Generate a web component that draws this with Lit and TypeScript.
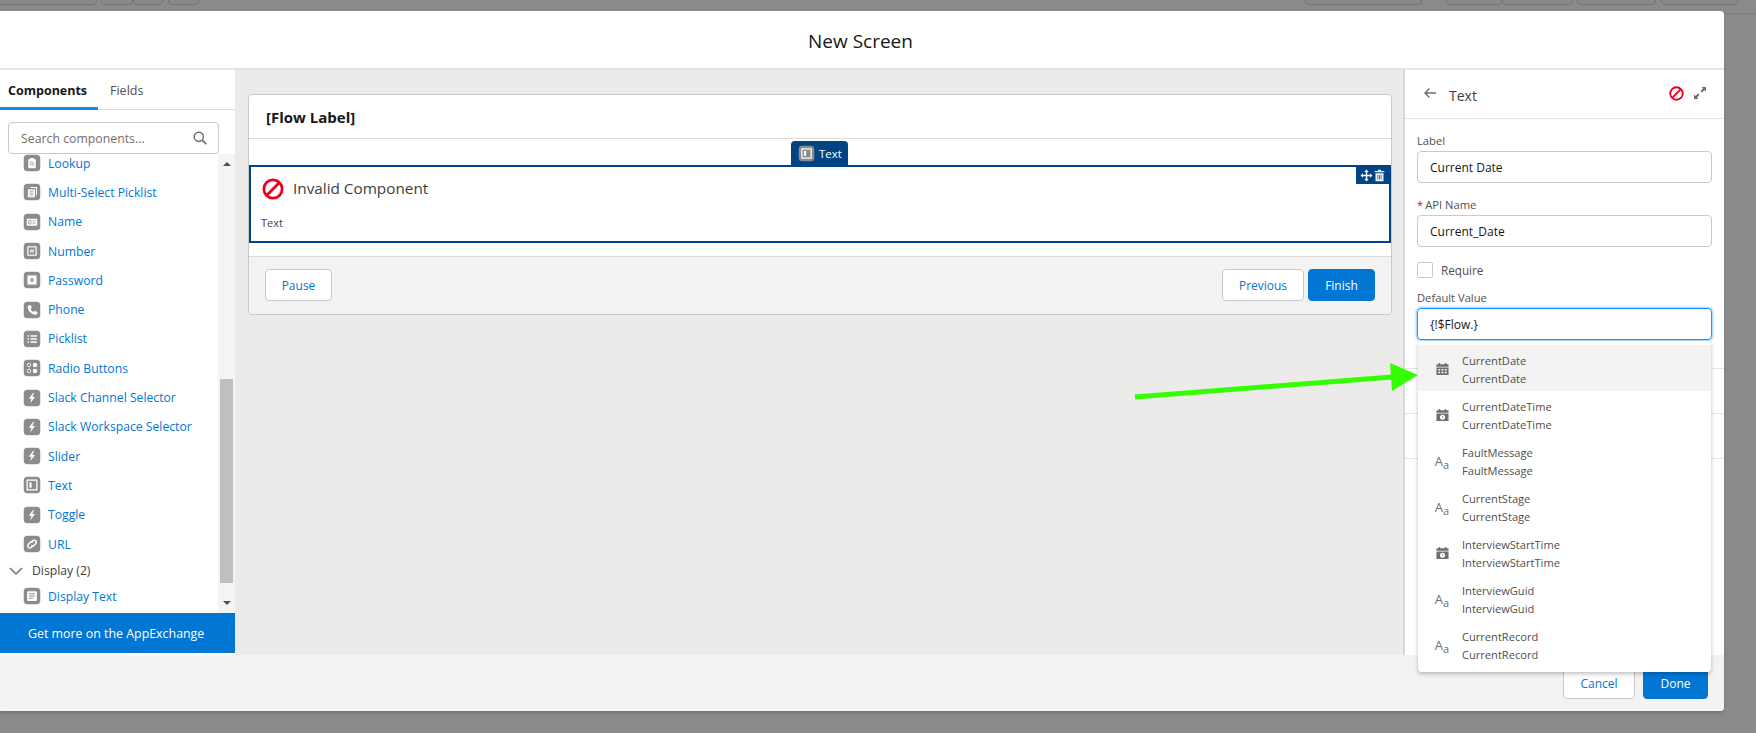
import { LitElement, html, css, svg } from "lit";
import { customElement } from "lit/decorators.js";

const bolt = svg`<path d="M13.6 5 7.800 13h3.400l-1.400 6 6.200-8.400h-3.500l2.300-5.600z" fill="#fff"/>`;
const icons: Record<string, any> = {
  lookup: svg`<path d="M7 7h2.500V5.200h5V7H17v12H7z" fill="#fff"/><circle cx="11.500" cy="12.500" r="2" fill="none" stroke="#8c8c8c" stroke-width="1.100"/><path d="m13 14 1.700 1.800" stroke="#8c8c8c" stroke-width="1.100"/>`,
  multi: svg`<path d="M10 6h8v10" fill="none" stroke="#fff" stroke-width="1.400"/><path d="M6.500 8.500H16V19H6.500z" fill="#fff"/><path d="M8.500 11h5.500M8.500 13.500h5.500M8.500 16h5.500" stroke="#8c8c8c"/>`,
  name: svg`<rect x="5" y="7.500" width="14" height="9.500" rx="1" fill="#fff"/><path d="M7.500 10h3v4.500h-3zM12.500 10.500h4.500M12.500 13.500h4.500" stroke="#8c8c8c" fill="none"/>`,
  number: svg`<rect x="6.500" y="6.500" width="11" height="11" fill="none" stroke="#fff" stroke-width="1.600"/><path d="M11 9.500 10 14.500M14 9.500l-1 5M9.300 11h5.500M9 13h5.500" stroke="#fff" stroke-width=".9"/>`,
  password: svg`<rect x="6" y="6" width="12" height="12" fill="#fff"/><path d="M12 8.700v6.600M9.200 10.400l5.600 3.200M14.800 10.400l-5.600 3.200" stroke="#8c8c8c" stroke-width="1.300"/>`,
  phone: svg`<path d="M8 5.500 10.300 5.300l1.500 3.700-1.600 1.500c.8 1.700 2.100 3.200 3.900 4.100l1.600-1.600 3.500 1.600-.3 2.400c-.2.800-1.100 1.500-2.100 1.400C11 17.700 6.300 12.800 6.200 7.600c0-1 .9-2 1.800-2.100z" fill="#fff"/>`,
  picklist: svg`<path d="M6 8h2M6 12h2M6 16h2M10 8h8.500M10 12h8.500M10 16h8.500" stroke="#fff" stroke-width="1.900"/>`,
  radio: svg`<circle cx="8" cy="8" r="2.300" fill="none" stroke="#fff" stroke-width="1.100"/><circle cx="16" cy="8" r="2.900" fill="#fff"/><circle cx="8" cy="16" r="2.300" fill="none" stroke="#fff" stroke-width="1.100"/><circle cx="16" cy="16" r="2.900" fill="#fff"/>`,
  bolt,
  text: svg`<rect x="5.500" y="5.500" width="13" height="13" fill="none" stroke="#fff" stroke-width="1.700"/><rect x="8.500" y="8.500" width="3" height="7" fill="#fff"/>`,
  url: svg`<g fill="none" stroke="#fff" stroke-width="1.900"><path d="M11 9.500 12.800 7.700a2.800 2.800 0 0 1 4 4L14.500 14a2.800 2.800 0 0 1-3.700.2"/><path d="M13 14.500l-1.800 1.800a2.800 2.800 0 0 1-4-4L9.500 10a2.800 2.800 0 0 1 3.700-.2"/></g>`,
  display: svg`<rect x="5.500" y="5.500" width="13" height="13" rx="1.500" fill="#fff"/><path d="M8 9h8M8 12h8M8 15h5.500" stroke="#8c8c8c" stroke-width="1.300"/>`,
};

const fields: [string, string][] = [
  ["Lookup", "lookup"], ["Multi-Select Picklist", "multi"], ["Name", "name"], ["Number", "number"],
  ["Password", "password"], ["Phone", "phone"], ["Picklist", "picklist"], ["Radio Buttons", "radio"],
  ["Slack Channel Selector", "bolt"], ["Slack Workspace Selector", "bolt"], ["Slider", "bolt"],
  ["Text", "text"], ["Toggle", "bolt"], ["URL", "url"],
];

const results: [string, string][] = [
  ["CurrentDate", "date"], ["CurrentDateTime", "time"], ["FaultMessage", "aa"], ["CurrentStage", "aa"],
  ["InterviewStartTime", "time"], ["InterviewGuid", "aa"], ["CurrentRecord", "aa"],
];

const ghosts: [number, number][] = [
  [-6, 103], [101, 32], [133, 30], [168, 31], [1305, 117], [1446, 56], [1502, 71], [1577, 79], [1661, 77],
];

const tile = (k: string) => html`<svg class="tile" viewBox="0 0 24 24"><rect x="1" y="1" width="22" height="22" rx="5" fill="#8c8c8c"/>${icons[k]}</svg>`;

const noEntry = (cls: string) => html`<svg class=${cls} viewBox="0 0 24 24"><circle cx="12" cy="12" r="10" fill="none" stroke="#ea001e" stroke-width="3"/><path d="M5.500 18.500l13-13" stroke="#ea001e" stroke-width="3"/></svg>`;

const resultIcon = (k: string) => {
  if (k === "aa") return html`<span class="aa">A<small>a</small></span>`;
  if (k === "date") return html`<svg class="ri" viewBox="0 0 14 14"><path d="M3 .5h1.500V2h5V.5H11V2h2.500v2.500H.500V2H3zM.500 5.500h13v8H.500z" fill="#706e6b"/><path d="M2.500 7h2v1.500h-2zM6 7h2v1.500H6zM9.500 7h2v1.500h-2zM2.500 10h2v1.500h-2zM6 10h2v1.500H6zM9.500 10h2v1.500h-2z" fill="#fff"/></svg>`;
  return html`<svg class="ri" viewBox="0 0 14 14"><path d="M3 .5h1.500V2h5V.5H11V2h2.500v2.500H.500V2H3zM.500 5.500h13v8H.500z" fill="#706e6b"/><circle cx="7" cy="9.500" r="2.700" fill="#fff"/><path d="M7 8v1.600l1 .6" stroke="#706e6b" fill="none" stroke-width=".8"/></svg>`;
};

@customElement("app-root")
export class AppRoot extends LitElement {
  static styles = css`
    :host { display: block; width: 1756px; height: 733px; background: #8a8a8a; overflow: hidden; position: relative;
      font-family: "Open Sans", "Noto Sans", sans-serif; font-size: 12px; color: #3e3e3c; }
    * { box-sizing: border-box; }
    .ghosts { height: 11px; position: relative; }
    .ghost { position: absolute; top: -10px; height: 15px; border: 1px solid #757575; border-radius: 4px; }
    .hair { position: absolute; left: 1724px; right: 0; top: 13px; height: 1px; background: #7d7d7d; }
    .modal { width: 1724px; height: 700px; background: #fff; border-radius: 0 4px 4px 0; display: flex; flex-direction: column;
      box-shadow: 0 2px 3px rgba(0,0,0,.16); }
    .title { height: 59px; flex: none; display: flex; align-items: center; justify-content: center; font-size: 19px; color: #181818; border-bottom: 2px solid #e5e5e5; padding: 2px 3px 0 0; }
    .body { height: 585px; flex: none; display: flex; background: #ecebea; }
    .side { width: 235px; flex: none; background: #fff; display: flex; flex-direction: column; }
    .tabs { height: 40px; flex: none; display: flex; border-bottom: 1px solid #dddbda; font-size: 12.500px; }
    .tab { padding-top: 12px; }
    .tab.on { width: 98px; padding-left: 8px; font-weight: 700; color: #181818; border-bottom: 3px solid #1589ee; height: 40px; }
    .tab.off { padding-left: 12px; color: #514f4d; }
    .search { flex: none; margin: 12px 0 0 8px; width: 211px; height: 32px; border: 1px solid #c9c9c9; border-radius: 4px; display: flex; align-items: center; justify-content: space-between; padding: 0 11px 0 12px; color: #706e6b; font-size: 12.300px; background: #fff; position: relative; z-index: 1; }
    .search svg { width: 14px; height: 14px; }
    .listwrap { height: 459px; flex: none; display: flex; }
    .list { flex: 1; margin-top: -5.500px; min-width: 0; }
    .scroll { width: 17px; background: #f4f4f4; flex: none; display: flex; flex-direction: column; align-items: center; }
    .arrow { width: 0; height: 0; border-left: 4px solid transparent; border-right: 4px solid transparent; }
    .arrow.up { border-bottom: 4px solid #505050; margin-top: 8px; }
    .arrow.down { border-top: 4px solid #505050; }
    .thumb { width: 13px; height: 204px; background: #bfbfbf; margin: 213px 0 18px; }
    .item { height: 29.300px; display: flex; align-items: center; padding-left: 23px; gap: 7px; color: #0176d3; font-size: 12.200px; white-space: nowrap; }
    .tile { width: 18px; height: 18px; flex: none; }
    .group { height: 24px; display: flex; align-items: center; padding-left: 9px; gap: 9px; color: #3e3e3c; font-size: 12.200px; }
    .group svg { width: 14px; height: 14px; }
    .item.last { height: 27px; }
    .more { height: 40px; flex: none; background: #0176d3; color: #fff; display: flex; align-items: center; padding-left: 28px; font-size: 12.400px; }
    .canvas { flex: 1; padding: 24px 0 0 13px; min-width: 0; }
    .card { width: 1144px; height: 221px; background: #fff; border: 1px solid #c9c9c9; border-radius: 4px; display: flex; flex-direction: column; }
    .cardhead { height: 44px; flex: none; display: flex; align-items: center; padding-left: 17px; font-weight: 700; font-size: 15px; color: #181818; border-bottom: 1px solid #dddbda; }
    .gap { height: 26px; flex: none; position: relative; }
    .pill { position: absolute; left: 542px; top: 2px; width: 57px; height: 24px; background: #014486; color: #fff; border-radius: 4px 4px 0 0; display: flex; align-items: center; gap: 4px; padding-left: 7px; font-size: 11.500px; }
    .pill svg { width: 17px; height: 17px; }
    .sel { height: 78px; flex: none; border: 2px solid #014486; position: relative; padding: 11px 0 0 11px; }
    .tools { position: absolute; right: -1px; top: -1px; width: 34px; height: 18px; background: #014486; display: flex; align-items: center; justify-content: center; }
    .tools svg { width: 13px; height: 13px; }
    .inv { display: flex; align-items: center; gap: 9px; font-size: 15.300px; color: #3e3e3c; height: 22px; }
    .inv svg { width: 22px; height: 22px; }
    .inv span { position: relative; top: -1px; }
    .txt { margin-top: 16px; font-size: 11px; line-height: 14px; color: #444; margin-left: -1px; }
    .cardfoot { flex: 1; margin-top: 13px; background: #f3f3f3; border-top: 1px solid #dddbda; border-radius: 0 0 4px 4px; display: flex; align-items: flex-start; justify-content: space-between; padding: 12px 16px 0 16px; }
    .btn { height: 32px; border: 1px solid #c9c9c9; border-radius: 4px; background: #fff; color: #0176d3; font-size: 12px; display: flex; align-items: center; justify-content: center; }
    .btn.pri { background: #0176d3; border-color: #0176d3; color: #fff; }
    .btns { display: flex; gap: 4px; }
    .panel { width: 321px; flex: none; background: #fff; border-left: 2px solid #d8d8d8; display: flex; flex-direction: column; position: relative; }
    .phead { height: 49px; flex: none; border-bottom: 1px solid #e5e5e5; display: flex; align-items: center; padding: 0 17px 0 18px; font-size: 14px; color: #3e3e3c; }
    .phead .back { width: 14px; height: 14px; margin-right: 12px; position: relative; top: -1px; }
    .phead .ttl { flex: 1; position: relative; top: 1px; }
    .phead .ne { width: 15px; height: 15px; margin-right: 9px; position: relative; top: -1px; }
    .phead .ex { width: 14px; height: 14px; position: relative; top: -1px; }
    .form { padding: 0 12px; }
    .lab { font-size: 11.200px; line-height: 16px; color: #514f4d; }
    .inp { height: 32px; border: 1px solid #c9c9c9; border-radius: 4px; display: flex; align-items: center; padding-left: 12px; font-size: 12px; color: #181818; margin-top: 2px; }
    .req { color: #ea001e; margin-right: 2px; }
    .chk { display: flex; align-items: center; gap: 8px; font-size: 11.700px; color: #514f4d; height: 16px; }
    .box { width: 16px; height: 16px; border: 1px solid #c9c9c9; border-radius: 2px; }
    .focus { border-color: #1b96ff; box-shadow: 0 0 3px #1b96ff; }
    .rule { height: 1px; background: #e5e5e5; position: absolute; left: 0; right: 0; }
    .menu { position: absolute; left: 13px; top: 271px; width: 293px; height: 331px; background: #fff; border-radius: 4px; box-shadow: 0 2px 4px rgba(0,0,0,.25); padding-top: 4px; z-index: 3; }
    .row { height: 46px; display: flex; align-items: center; padding-left: 17px; font-size: 11.100px; color: #514f4d; line-height: 18px; }
    .row.hl { background: #f3f3f3; }
    .row .ico { width: 14px; display: flex; justify-content: center; margin: 2px 13px 0 0; }
    .row .names { padding-top: 4px; }
    .ri { width: 13px; height: 14px; flex: none; }
    .aa { font-size: 13px; color: #706e6b; line-height: 14px; white-space: nowrap; }
    .aa small { font-size: 11px; position: relative; top: 3px; }
    .foot { height: 56px; flex: none; background: #f3f3f3; display: flex; align-items: flex-start; justify-content: flex-end; gap: 8px; padding: 12px 16px 0 0; border-radius: 0 0 4px 0; }
    .green { position: absolute; left: 1130px; top: 355px; width: 295px; height: 50px; z-index: 5; pointer-events: none; }
  `;

  render() {
    return html`
      <div class="ghosts">
        ${ghosts.map(([l, w]) => html`<div class="ghost" style="left:${l}px;width:${w}px"></div>`)}
        <div class="hair"></div>
      </div>
      <div class="modal">
        <div class="title">New Screen</div>
        <div class="body">
          <div class="side">
            <div class="tabs"><div class="tab on">Components</div><div class="tab off">Fields</div></div>
            <div class="search"><span>Search components...</span>
              <svg viewBox="0 0 14 14"><circle cx="5.800" cy="5.800" r="4.600" fill="none" stroke="#706e6b" stroke-width="1.500"/><path d="m9.200 9.200 4 4" stroke="#706e6b" stroke-width="1.700"/></svg></div>
            <div class="listwrap">
              <div class="list">
                ${fields.map(([n, k]) => html`<div class="item">${tile(k)}<span>${n}</span></div>`)}
                <div class="group"><svg viewBox="0 0 14 14"><path d="m1 4 6 6 6-6" fill="none" stroke="#706e6b" stroke-width="1.500"/></svg><span>Display (2)</span></div>
                <div class="item last">${tile("display")}<span>Display Text</span></div>
              </div>
              <div class="scroll"><div class="arrow up"></div><div class="thumb"></div><div class="arrow down"></div></div>
            </div>
            <div class="more">Get more on the AppExchange</div>
          </div>
          <div class="canvas">
            <div class="card">
              <div class="cardhead">[Flow Label]</div>
              <div class="gap"><div class="pill"><svg viewBox="0 0 24 24"><rect x="1" y="1" width="22" height="22" rx="5" fill="#8c8c8c"/>${icons.text}</svg>Text</div></div>
              <div class="sel">
                <div class="tools">
                  <svg viewBox="0 0 12 12"><path d="M6 .5 8 2.700H6.700v2.600h2.600V4l2.200 2-2.200 2V6.700H6.700v2.600H8l-2 2.200-2-2.200h1.300V6.700H2.700V8L.5 6l2.200-2v1.300h2.600V2.700H4z" fill="#fff"/></svg>
                  <svg viewBox="0 0 12 12"><path d="M4.500.8h3v1h3v1.200h-9V1.800h3zM2.300 4h7.400v7.300H2.300z" fill="#e8eef5"/><path d="M4.500 5.500v4M6 5.500v4M7.500 5.500v4" stroke="#014486" stroke-width=".6"/></svg>
                </div>
                <div class="inv">${noEntry("")}<span>Invalid Component</span></div>
                <div class="txt">Text</div>
              </div>
              <div class="cardfoot">
                <div class="btn" style="width:67px">Pause</div>
                <div class="btns"><div class="btn" style="width:82px">Previous</div><div class="btn pri" style="width:67px">Finish</div></div>
              </div>
            </div>
          </div>
          <div class="panel">
            <div class="phead">
              <svg class="back" viewBox="0 0 14 14"><path d="M13 7H2M6.500 2.500 2 7l4.500 4.500" fill="none" stroke="#706e6b" stroke-width="1.400"/></svg>
              <span class="ttl">Text</span>
              ${noEntry("ne")}
              <svg class="ex" viewBox="0 0 14 14"><path d="M8.500 1H13v4.500L11.500 4 9 6.500 7.500 5 10 2.500zM5.500 13H1V8.500L2.500 10 5 7.500 6.500 9 4 11.500z" fill="#706e6b"/></svg>
            </div>
            <div class="form">
              <div class="lab" style="margin-top:14px">Label</div>
              <div class="inp">Current Date</div>
              <div class="lab" style="margin-top:14px"><span class="req">*</span>API Name</div>
              <div class="inp">Current_Date</div>
              <div class="chk" style="margin-top:15px"><div class="box"></div>Require</div>
              <div class="lab" style="margin-top:12px">Default Value</div>
              <div class="inp focus">{!$Flow.}</div>
            </div>
            <div class="rule" style="top:298px"></div>
            <div class="rule" style="top:343px"></div>
            <div class="rule" style="top:388px"></div>
            <div class="menu">
              ${results.map(([n, k], i) => html`<div class="row ${i === 0 ? "hl" : ""}"><span class="ico">${resultIcon(k)}</span><div class="names">${n}<br />${n}</div></div>`)}
            </div>
          </div>
        </div>
        <div class="foot">
          <div class="btn" style="width:72px">Cancel</div>
          <div class="btn pri" style="width:65px">Done</div>
        </div>
      </div>
      <svg class="green" viewBox="0 0 295 50">
        <path d="M5 42 L262 22" stroke="#33ff00" stroke-width="5"/>
        <path d="M288 20 L260 8 L262 36 Z" fill="#33ff00"/>
      </svg>
    `;
  }
}
